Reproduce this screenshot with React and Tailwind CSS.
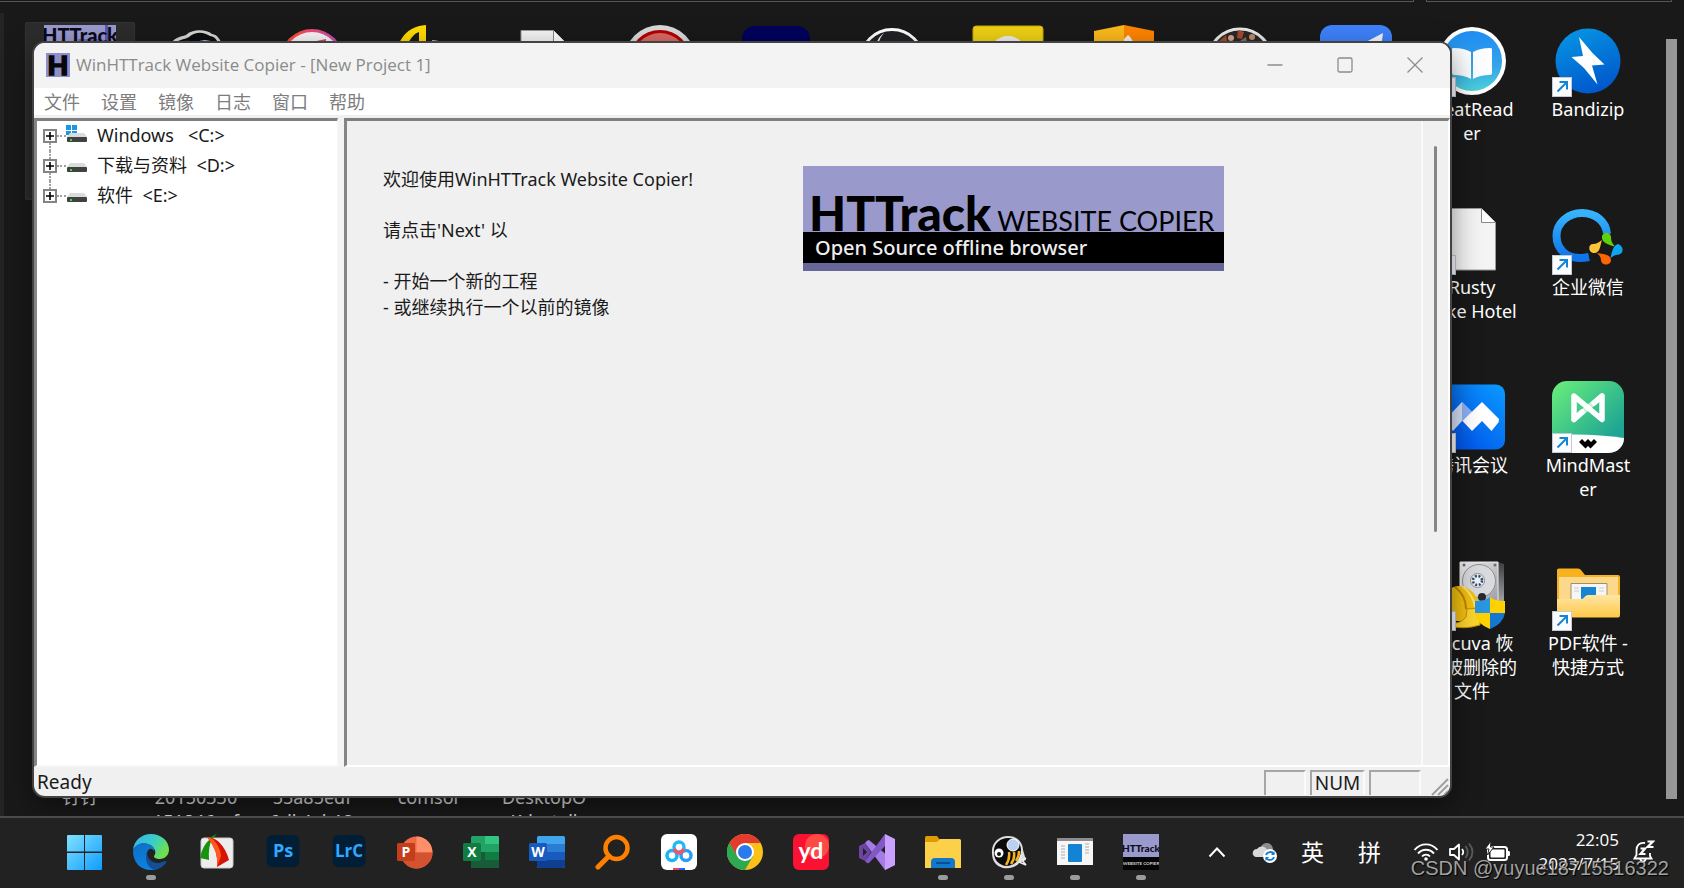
import React from "react";

const UI = "font-['Noto_Sans','Noto_Sans_CJK_SC',sans-serif]";
const NARROW = "font-['Open_Sans','Noto_Sans_CJK_SC',sans-serif]";

/* ---------- desktop icons, drawn on a 72 x 72 field ---------- */

function Art({ children, label, size = "size-[72px]", box = "0 0 72 72" }) {
  return (
    <svg viewBox={box} className={`${size} block shrink-0`} role="img" aria-label={label}>
      {children}
    </svg>
  );
}

function Shortcut() {
  return (
    <g>
      <rect x="0.5" y="52.5" width="19" height="19" fill="#fbfcfe" stroke="#c3c9d8" />
      <path d="M5.5 66.5L14 58M7.5 57H15V64.5" fill="none" stroke="#1583d6" strokeWidth="2" />
    </g>
  );
}

const HTTrackArt = () => (
  <Art label="WinHTTrack">
    <rect width="72" height="72" fill="#9999cc" />
    <rect y="44" width="72" height="28" fill="#050505" />
    <rect x="34" y="14" width="24" height="4" fill="#6c69c2" />
    <rect x="61" width="3" height="20" fill="#5b58bd" />
    <text x="36" y="18" textAnchor="middle" fill="#0b0a1c" fontFamily="Lato" fontSize="20" fontWeight="900">HTTrack</text>
  </Art>
);
const BirdArt = () => (
  <Art label="Bird">
    <path d="M8 22C14 12 20 12 26 10C32 4 46 4 52 9C58 10 60 14 64 24L60 60H12z" fill="#d5d5d3" />
    <path d="M12 21C18 14 24 15 29 12C36 6 44 7 50 11C56 12 58 16 60 24V56H14z" fill="#0c0d10" />
    <path d="M14 20C20 15 28 15 34 17L26 26H12z" fill="#33475c" />
    <ellipse cx="45" cy="24" rx="12" ry="9" fill="#a9bfd6" />
  </Art>
);
const RingArt = () => (
  <Art label="Music">
    <defs>
      <linearGradient id="ringA" x1="0" x2="1">
        <stop offset="0.2" stopColor="#ff4a3d" />
        <stop offset="1" stopColor="#c04fd0" />
      </linearGradient>
    </defs>
    <circle cx="36" cy="36" r="32" fill="url(#ringA)" />
    <circle cx="36" cy="36" r="29" fill="#f7f5f6" />
    <path d="M26 19L50 14V44H46V22L30 25V48H26z" fill="#cf4a63" />
  </Art>
);
const YellowArcArt = () => (
  <Art label="Scanner">
    <path d="M34 0V44H2C2 20 12 1 34 0z" fill="#ffdb00" />
    <path d="M27 7V38H12C12 24 18 10 27 7z" fill="#1a1a1a" />
    <path d="M40 15C48 15 54 19 58 26L40 40z" fill="#b9b9b9" />
  </Art>
);
const DocArt = ({ shortcut }) => (
  <Art label="Document">
    <path d="M13 5.5H45.5L59.5 19.5V67H13z" fill="#f4f4f4" stroke="#9a9a9a" />
    <path d="M45.5 5.5V19.5H59.5" fill="#ffffff" stroke="#888888" />
    {shortcut && <Shortcut />}
  </Art>
);
const RecordArt = () => (
  <Art label="Recorder">
    <circle cx="36" cy="36" r="36" fill="#d9dadb" />
    <circle cx="36" cy="36" r="31" fill="#b50000" />
    <circle cx="36" cy="36" r="28" fill="#d96a64" />
  </Art>
);
const NavyArt = () => (
  <Art label="Premiere">
    <rect x="2" y="1" width="68" height="68" rx="13" fill="#00005b" />
  </Art>
);
const BlackOrbArt = () => (
  <Art label="Orb">
    <circle cx="36" cy="36" r="31.5" fill="#232125" stroke="#ffffff" strokeWidth="3" />
    <path d="M20 26C20 16 22 13 28 8C23 14 22 18 22 28z" fill="#ffffff" />
  </Art>
);
const YellowCardArt = () => (
  <Art label="Card">
    <rect x="1" y="1" width="70" height="66" rx="3" fill="#eed015" stroke="#c8a800" />
    <circle cx="36" cy="30" r="19" fill="#ededed" />
  </Art>
);
const CubeArt = () => (
  <Art label="Cube">
    <path d="M36 0L6 6V60L36 72z" fill="#fbb91b" />
    <path d="M36 0L66 6V60L36 72z" fill="#ff8400" />
    <path d="M40 10C44 13 46 18 50 30L36 40V14z" fill="#f3f0ec" />
  </Art>
);
const PhotoArt = () => (
  <Art label="Game">
    <circle cx="36" cy="36" r="32" fill="#2d2624" stroke="#e8e8e8" strokeWidth="3" />
    <path d="M14 17L22 10L24 20zM34 5L40 7L38 14L33 13z" fill="#a34a2e" />
    <circle cx="27" cy="13" r="3" fill="#d0a68c" />
    <circle cx="48" cy="12" r="3" fill="#b98d70" />
    <path d="M30 20L42 12L44 24zM52 16L58 20L50 24z" fill="#7c7269" />
  </Art>
);
const PaperPlaneArt = () => (
  <Art label="Plane">
    <rect width="72" height="72" rx="12" fill="#3f82fb" />
    <path d="M63 8L44 18L40 24L60 30zM4 17L16 19L40 34L20 30z" fill="#f4f7fd" />
  </Art>
);
const NeatReaderArt = () => (
  <Art label="NeatReader">
    <defs>
      <linearGradient id="neat" x1="0" y1="0" x2="0" y2="1">
        <stop offset="0" stopColor="#1f8cf3" />
        <stop offset="0.6" stopColor="#35a5ea" />
        <stop offset="1" stopColor="#4bd3da" />
      </linearGradient>
    </defs>
    <circle cx="36" cy="36" r="34" fill="#ffffff" />
    <circle cx="36" cy="36" r="30" fill="url(#neat)" />
    <path d="M16 24Q16 23 18 23Q28 23 35 27V54Q28 50 18 50Q16 50 16 48zM56 24Q56 23 54 23Q44 23 37 27V54Q44 50 54 50Q56 50 56 48z" fill="#fbfdff" />
    <Shortcut />
  </Art>
);
const BandizipArt = () => (
  <Art label="Bandizip">
    <defs>
      <linearGradient id="bandi" x1="0.2" y1="0" x2="0.6" y2="1">
        <stop offset="0" stopColor="#0696e4" />
        <stop offset="1" stopColor="#0057cb" />
      </linearGradient>
    </defs>
    <circle cx="36" cy="36" r="32.5" fill="url(#bandi)" />
    <path d="M27 12L40.5 28L52.5 39.5L40 40.5L45.5 59.5L32 43L19.5 32L31 31z" fill="#ffffff" />
    <Shortcut />
  </Art>
);
const WeComArt = () => (
  <Art label="WeCom">
    <defs>
      <linearGradient id="wecom" x1="0" y1="0" x2="0" y2="1">
        <stop offset="0" stopColor="#37b3fc" />
        <stop offset="1" stopColor="#0e74e8" />
      </linearGradient>
    </defs>
    <path d="M55 31C54 18 43 10 30 10C16 10 4.500 20 4.500 33C4.500 42 9 48 15 52C22 55.500 30 55.500 37 54" fill="none" stroke="url(#wecom)" strokeWidth="8" />
    <circle cx="53.500" cy="44.500" r="14" fill="#191919" />
    <path d="M50 33C52 28 58 29 59 33.500C59 38 60 40 63 43.500C57 42 49 40 50 33z" fill="#5fd10c" />
    <path d="M66 41C72 43 72 50 67 51.500C64 51.500 61 53 58 55.500C60 51 60 43 66 41z" fill="#0fa6ee" />
    <path d="M59 57C59 63 49 63 49 57C49 54 47 52 45 50C51 51 58 51 59 57z" fill="#fc6500" />
    <path d="M41 50C36 49 36 41 41 41C45 41 47 39 50 37C48 41 49 51 41 50z" fill="#fdc437" />
    <Shortcut />
  </Art>
);
const MeetingArt = () => (
  <Art label="Tencent Meeting">
    <defs>
      <linearGradient id="meet" x1="1" y1="0" x2="0" y2="1">
        <stop offset="0" stopColor="#0a9bff" />
        <stop offset="1" stopColor="#0046e6" />
      </linearGradient>
    </defs>
    <rect x="3" y="3.500" width="66" height="65" rx="9" fill="url(#meet)" />
    <path d="M26 21L36 31L26 40L17 50L8 40z" fill="#d6e2f8" />
    <path d="M26 21L36 31V40L26 40z" fill="#8fb0f7" />
    <path d="M46 21L63 38Q63 41 62 42L55.500 50L46 40L36 50L26.500 40z" fill="#ffffff" />
    <Shortcut />
  </Art>
);
const MindMasterArt = () => (
  <Art label="MindMaster">
    <defs>
      <linearGradient id="mind" x1="0" y1="0" x2="1" y2="1">
        <stop offset="0" stopColor="#6bf07a" />
        <stop offset="0.8" stopColor="#1ea594" />
      </linearGradient>
      <clipPath id="mindClip">
        <rect width="72" height="72" rx="15" />
      </clipPath>
    </defs>
    <g clipPath="url(#mindClip)">
      <rect width="72" height="72" fill="url(#mind)" />
      <path d="M0 54Q40 52 72 57V72H0z" fill="#ffffff" />
      <path d="M22 38L50 15" stroke="#c5f1d6" strokeWidth="5.500" />
      <path d="M22 38.500V15L50 38.500V15M22 38.500L30 31M50 15L42 22" fill="none" stroke="#ffffff" strokeWidth="5.500" strokeLinejoin="round" strokeLinecap="round" />
      <path d="M27 61L30 58L33 61L36 58L39 61L42 58L45 61L38.500 67.500L36 65L33.500 67.500z" fill="#000000" />
    </g>
    <Shortcut />
  </Art>
);
const RecuvaArt = () => (
  <Art label="Recuva">
    <defs>
      <linearGradient id="disk" x1="0" y1="0" x2="1" y2="1">
        <stop offset="0" stopColor="#f2f2f3" />
        <stop offset="1" stopColor="#9b9ca1" />
      </linearGradient>
      <linearGradient id="diskSide" x1="0" y1="0" x2="0" y2="1">
        <stop offset="0" stopColor="#3c3c3e" />
        <stop offset="1" stopColor="#a6a6a8" />
      </linearGradient>
    </defs>
    <path d="M62 3L68 5V44H62z" fill="url(#diskSide)" />
    <path d="M24 3H62V44H24z" fill="url(#disk)" stroke="#e9e9ea" />
    <circle cx="43" cy="22" r="16.500" fill="#d9dade" stroke="#8d8f96" />
    <circle cx="41.500" cy="21.500" r="7" fill="#eef0f4" stroke="#8d8f96" />
    <circle cx="41.500" cy="21.500" r="4.500" fill="none" stroke="#2d4d70" strokeWidth="2.500" strokeDasharray="2 1.600" />
    <circle cx="28" cy="6" r="1.500" fill="#6d6e72" />
    <circle cx="59" cy="6" r="1.500" fill="#6d6e72" />
    <circle cx="46" cy="38" r="4" fill="#2a2a2d" />
    <path d="M6 48C6 34 14 27 24 27C36 29 43 38 44 50L30 62H8z" fill="#f3c010" />
    <path d="M19 28C27 34 30 42 30 50" fill="none" stroke="#b98402" strokeWidth="2" />
    <path d="M26 27C34 33 38 40 39 48" fill="none" stroke="#fce468" strokeWidth="2" />
    <path d="M12 64Q24 66 30 58L31 50L44 49V66Q28 71 14 67z" fill="#fcd52e" stroke="#c68f00" />
    <path d="M39 42Q50 42 54 38V54H39z" fill="#2a96e0" />
    <path d="M69 42Q58 42 54 38V54H69z" fill="#ffd100" />
    <path d="M39 54H54V70Q41 65 39 54z" fill="#ffd100" />
    <path d="M69 54H54V70Q67 65 69 54z" fill="#1478d0" />
    <Shortcut />
  </Art>
);
const FolderArt = () => (
  <Art label="Folder">
    <defs>
      <linearGradient id="fold" x1="0" y1="0" x2="0" y2="1">
        <stop offset="0" stopColor="#ffe6a2" />
        <stop offset="1" stopColor="#fdc848" />
      </linearGradient>
    </defs>
    <path d="M5 11Q5 9.500 7 9.500H26Q28 9.500 29 11L33 16H66Q68 16 68 18V50H5z" fill="#f7b21e" />
    <path d="M7 18H66V50H7z" fill="#fbd88c" />
    <path d="M19 24.500H55V45H19z" fill="#f6f6f6" stroke="#a38f60" />
    <path d="M22 29H27M22 32H27M47 29H52M47 32H52" stroke="#c9ccd0" />
    <path d="M29 28H44V44H29z" fill="#1683d3" />
    <path d="M5 40H29Q31 40 33 37.500Q34 36 36 36H68V56Q68 58.500 66 58.500H7Q5 58.500 5 56z" fill="url(#fold)" />
    <Shortcut />
  </Art>
);

function DesktopItem({ art, lines = [], selected }) {
  return (
    <div className={`flex h-[178px] shrink-0 flex-col items-center pt-[3px] ${selected ? "mx-[3px] rounded-[2px] bg-[#2c2c2c] ring-1 ring-inset ring-[#333333]" : ""}`}>
      {art}
      <div className="w-full text-center text-[18px] leading-[24px] text-white">
        {lines.map((l) => (
          <div key={l}>{l}</div>
        ))}
      </div>
    </div>
  );
}

const COLUMNS = [
  { items: [{ art: <HTTrackArt />, selected: true }], foot: ["钉钉"] },
  { items: [{ art: <BirdArt /> }], foot: ["20150330", "151846_ef"] },
  { items: [{ art: <RingArt /> }], foot: ["55a85edf", "9db1cb12"] },
  { items: [{ art: <YellowArcArt /> }], foot: ["comsol"] },
  { items: [{ art: <DocArt /> }], foot: ["DesktopO", "Kdestall"] },
  { items: [{ art: <RecordArt /> }] },
  { items: [{ art: <NavyArt /> }] },
  { items: [{ art: <BlackOrbArt /> }] },
  { items: [{ art: <YellowCardArt /> }] },
  { items: [{ art: <CubeArt /> }] },
  { items: [{ art: <PhotoArt /> }] },
  { items: [{ art: <PaperPlaneArt /> }] },
  {
    items: [
      { art: <NeatReaderArt />, lines: ["NeatRead", "er"] },
      { art: <DocArt shortcut />, lines: ["Rusty", "Lake Hotel"] },
      { art: <MeetingArt />, lines: ["腾讯会议"] },
      { art: <RecuvaArt />, lines: ["Recuva 恢", "复被删除的", "文件"] },
    ],
  },
  {
    items: [
      { art: <BandizipArt />, lines: ["Bandizip"] },
      { art: <WeComArt />, lines: ["企业微信"] },
      { art: <MindMasterArt />, lines: ["MindMast", "er"] },
      { art: <FolderArt />, lines: ["PDF软件 -", "快捷方式"] },
    ],
  },
];

/* ---------- application window ---------- */

const MENUS = ["文件", "设置", "镜像", "日志", "窗口", "帮助"];
const DRIVES = [
  { name: "Windows", letter: "<C:>", system: true },
  { name: "下载与资料", letter: "<D:>" },
  { name: "软件", letter: "<E:>" },
];

function DriveIcon({ system }) {
  return (
    <svg viewBox="0 0 22 22" className="size-[22px] shrink-0" aria-hidden="true">
      {system && <path d="M0 0H5V5H0zM6 0H11V5H6zM0 6H5V10H0zM6 6H11V10H6z" fill="#1b97e8" />}
      <path d="M4 8H18L21 12H1z" fill="#d9dbde" />
      <rect x="1" y="12" width="20" height="5" rx="1" fill="#3f4340" />
      <rect x="4" y="14" width="2" height="2" fill="#42d64a" />
    </svg>
  );
}

function Tree() {
  return (
    <ul className="flex flex-col px-[6px]" role="tree">
      {DRIVES.map((d, i) => (
        <li key={d.letter} className="flex h-[30px] items-center" role="treeitem">
          <div className="flex h-full w-[14px] flex-col items-center">
            <span className={`w-0 flex-1 border-l-2 border-dotted ${i ? "border-[#a0a0a0]" : "border-transparent"}`} />
            <button className="flex size-[14px] items-center justify-center border-2 border-[#848484] bg-white" aria-label={`Expand ${d.name}`}>
              <svg viewBox="0 0 8 8" className="size-[8px]">
                <path d="M4 0V8M0 4H8" stroke="#000000" strokeWidth="1.6" />
              </svg>
            </button>
            <span className={`w-0 flex-1 border-l-2 border-dotted ${i < 2 ? "border-[#a0a0a0]" : "border-transparent"}`} />
          </div>
          <span className="w-[9px] border-t-2 border-dotted border-[#a0a0a0]" />
          <DriveIcon system={d.system} />
          <span className="whitespace-pre pb-[2px] pl-[9px] text-[18px] leading-[24px] text-[#1a1a1a]">
            {d.name}
            {d.system ? "   " : "  "}
            {d.letter}
          </span>
        </li>
      ))}
    </ul>
  );
}

function Banner() {
  return (
    <div className="flex h-[105px] w-[421px] shrink-0 flex-col bg-[#666699]">
      <div className="flex h-[66px] items-end gap-[6px] bg-[#9999cc] pl-[6px] text-black">
        <span className="font-['Lato',sans-serif] text-[48px] font-black leading-[38px]">HTTrack</span>
        <span className="whitespace-nowrap font-['Lato',sans-serif] text-[27px] leading-[22px]">WEBSITE COPIER</span>
      </div>
      <div className="flex h-[31px] items-center bg-black pl-[12px] text-[20px] font-medium leading-[24px] text-[#eeeeee]">
        Open Source offline browser
      </div>
    </div>
  );
}

function AppWindow() {
  return (
    <section className="absolute bottom-[20px] left-[34px] right-[234px] top-[43px] flex flex-col overflow-hidden rounded-[11px] bg-[#f0f0f0] shadow-[0_0_0_2px_#434343,0_10px_30px_rgba(0,0,0,0.5)]">
      <header className="flex h-[45px] shrink-0 items-center bg-[#f3f3f3] pb-[2px] pl-[12px]">
        <svg viewBox="0 0 24 24" className="size-[24px]" aria-hidden="true">
          <rect width="24" height="24" fill="#8f8fc8" />
          <text x="12" y="22" textAnchor="middle" fill="#08080c" stroke="#08080c" strokeWidth="1.5" fontFamily="Lato" fontSize="27" fontWeight="900">H</text>
        </svg>
        <h1 className={`flex-1 pl-[6px] text-[17px] leading-[24px] text-[#8a8a8a] ${NARROW}`}>WinHTTrack Website Copier - [New Project 1]</h1>
        <button className="flex h-full w-[70px] items-center justify-center" aria-label="Minimize">
          <svg viewBox="0 0 16 16" className="size-[16px]" stroke="#8c8c8c" strokeWidth="1.3">
            <path d="M0.500 8H15.500" />
          </svg>
        </button>
        <button className="flex h-full w-[70px] items-center justify-center" aria-label="Maximize">
          <svg viewBox="0 0 16 16" className="size-[16px]" fill="none" stroke="#8c8c8c" strokeWidth="1.3">
            <rect x="1" y="1" width="14" height="14" rx="1.500" />
          </svg>
        </button>
        <button className="flex h-full w-[70px] items-center justify-center" aria-label="Close">
          <svg viewBox="0 0 16 16" className="size-[16px]" stroke="#8c8c8c" strokeWidth="1.3">
            <path d="M0.500 0.500L15.500 15.500M15.500 0.500L0.500 15.500" />
          </svg>
        </button>
      </header>
      <nav className="flex h-[27px] shrink-0 items-center gap-[21px] bg-white pl-[10px] text-[18px] leading-[24px] text-[#7d7d7d]">
        {MENUS.map((m) => (
          <button key={m}>{m}</button>
        ))}
      </nav>
      <div className="flex flex-1 pt-[3px]">
        <div className="w-[304px] shrink-0 border-b-2 border-l-[3px] border-r border-t-[3px] border-b-[#f7f7f7] border-l-[#858585] border-r-[#f7f7f7] border-t-[#7f7f7f] bg-white">
          <Tree />
        </div>
        <div className="w-[6px] shrink-0 bg-[#f3f3f3]" />
        <main className="flex flex-1 border-b-2 border-l-[3px] border-r-2 border-t-[3px] border-b-white border-l-[#858585] border-r-white border-t-[#7f7f7f]">
          <div className="flex flex-1 items-start pl-[36px] pt-[45px]">
            <div className="flex w-[420px] flex-col gap-[25px] text-[18px] leading-[26px] text-[#1a1a1a]">
              <p>欢迎使用WinHTTrack Website Copier!</p>
              <p>请点击'Next' 以</p>
              <p>
                - 开始一个新的工程
                <br />- 或继续执行一个以前的镜像
              </p>
            </div>
            <Banner />
          </div>
          <div className="flex w-[27px] shrink-0 justify-center border-l-2 border-[#fafafa] pt-[25px]">
            <div className="h-[386px] w-[3px] rounded-full bg-[#868686]" />
          </div>
        </main>
      </div>
      <footer className="flex h-[29px] shrink-0 items-center gap-[4px] pl-[3px] pt-[2px] text-[19px] leading-[23px] text-[#1a1a1a]">
        <span className="flex-1">Ready</span>
        <span className="h-[25px] w-[42px] border-2 border-b-0 border-l-[#a6a6a6] border-r-[#fafafa] border-t-[#a6a6a6]" />
        <span className="h-[25px] w-[55px] border-2 border-b-0 border-l-[#a6a6a6] border-r-[#fafafa] border-t-[#a6a6a6] text-center">NUM</span>
        <span className="h-[25px] w-[52px] border-2 border-b-0 border-l-[#a6a6a6] border-r-[#fafafa] border-t-[#a6a6a6]" />
        <svg viewBox="0 0 25 27" className="h-[27px] w-[25px] shrink-0" stroke="#a0a0a0" strokeWidth="2" aria-hidden="true">
          <path d="M7 26L23 10M13 26L23 16M19 26L23 22" />
        </svg>
      </footer>
    </section>
  );
}

/* ---------- taskbar ---------- */

function Task({ children, label, box = "0 0 36 36" }) {
  return <Art label={label} size="size-[36px]" box={box}>{children}</Art>;
}

const WindowsIcon = () => (
  <Task label="Start">
    <defs>
      <linearGradient id="win" x1="0" y1="0" x2="1" y2="1">
        <stop offset="0" stopColor="#82e0ff" />
        <stop offset="1" stopColor="#0d9dff" />
      </linearGradient>
    </defs>
    <path d="M1 1H17V17.500H0V2Q0 1 1 1zM18 1H34Q35 1 35 2V17.500H18zM0 19H17V36H1Q0 36 0 35zM18 19H35V35Q35 36 34 36H18z" fill="url(#win)" />
  </Task>
);
const EdgeIcon = () => (
  <Task label="Edge">
    <defs>
      <linearGradient id="edgeTop" x1="0" y1="0" x2="1" y2="0.5">
        <stop offset="0.1" stopColor="#35b5ea" />
        <stop offset="0.6" stopColor="#3bcfc0" />
        <stop offset="1" stopColor="#6fe04c" />
      </linearGradient>
      <linearGradient id="edgeLow" x1="0" y1="0" x2="0.6" y2="1">
        <stop offset="0" stopColor="#0f6fc4" />
        <stop offset="1" stopColor="#0b84e2" />
      </linearGradient>
    </defs>
    <path d="M0 16C1 6 9 0 18 0C28 0 36 7 36 15.500C36 21 32 25 27 25C23 25 20.500 23.500 21 22C24 19 22 13 16 10.500C10 8 3 10 0 16z" fill="url(#edgeTop)" />
    <path d="M0 17C2 11 8 8 14 9.500C20 11 22 15 21 17C18 12 13 16 14 22C15 30 24 31 33 27C34 29 27 36 18 36C7 36 0 28 0 17z" fill="url(#edgeLow)" />
    <path d="M14 18C11 26 15 35 22 35.500C28 34 32 31 33.500 27.500C33.500 26.500 32 27 30 28C22 31 14 27 14 18z" fill="#144e97" />
  </Task>
);
const CaptureIcon = () => (
  <Task label="FastStone Capture">
    <rect x="2" y="4" width="32" height="30" rx="3" fill="#ededed" stroke="#c9c9c9" />
    <path d="M18 0Q12 2 11 5Q3 12 1 24L10 26Q9 13 13 5z" fill="#17930d" />
    <path d="M8 3Q16 4 20 8Q27 15 30 26L18 33Q20 17 8 3z" fill="#d61505" />
    <path d="M8 3Q14 4 17 9Q22 16 22 22L18 33Q20 17 8 3z" fill="#ff5a1c" />
  </Task>
);
const AdobeIcon = ({ name }) => (
  <Task label={name}>
    <rect x="1.500" y="1" width="33" height="32" rx="6" fill="#001e36" />
    <text x="18" y="22.500" textAnchor="middle" fill="#31a8ff" fontFamily="Open Sans" fontSize={name === "Ps" ? 18 : 17} fontWeight="700">{name}</text>
  </Task>
);
const OfficeIcon = ({ letter, badge, children }) => (
  <Task label={letter}>
    {children}
    <rect x="0" y="9" width="18" height="18" rx="1.500" fill={badge} />
    <text x="9" y="23" textAnchor="middle" fill="#ffffff" fontFamily="Open Sans" fontSize="14" fontWeight="700">{letter}</text>
  </Task>
);
const PowerPointIcon = () => (
  <OfficeIcon letter="P" badge="#c43e1c">
    <circle cx="19.500" cy="18.500" r="16" fill="#ed6c47" />
    <path d="M19.500 2.500A16 16 0 0 1 35.500 18.500H19.500z" fill="#ff8f6b" />
    <path d="M3.500 18.500A16 16 0 0 0 35.500 18.500z" fill="#d35230" />
  </OfficeIcon>
);
const ExcelIcon = () => (
  <OfficeIcon letter="X" badge="#107c41">
    <rect x="8" y="2" width="28" height="32" rx="1.500" fill="#21a366" />
    <path d="M22 2H34.500Q36 2 36 3.500V10H22z" fill="#33c481" />
    <path d="M8 18H22V26H8z" fill="#185c37" />
    <path d="M22 18H36V26H22z" fill="#107c41" />
    <path d="M8 26H36V32.500Q36 34 34.500 34H9.500Q8 34 8 32.500z" fill="#185c37" />
  </OfficeIcon>
);
const WordIcon = () => (
  <OfficeIcon letter="W" badge="#185abd">
    <rect x="8" y="2" width="28" height="32" rx="1.500" fill="#41a5ee" />
    <path d="M8 10H36V18H8z" fill="#2b7cd3" />
    <path d="M8 18H36V26H8z" fill="#185abd" />
    <path d="M8 26H36V32.500Q36 34 34.500 34H9.500Q8 34 8 32.500z" fill="#103f91" />
  </OfficeIcon>
);
const SearchIcon = () => (
  <Task label="Everything">
    <circle cx="21.500" cy="14" r="11" fill="none" stroke="#ff8000" strokeWidth="4.500" />
    <path d="M14 22L3 33" stroke="#ff8000" strokeWidth="5" strokeLinecap="round" />
  </Task>
);
const NetdiskIcon = () => (
  <Task label="Baidu Netdisk">
    <rect width="36" height="36" rx="6" fill="#ffffff" />
    <circle cx="11" cy="21.500" r="5" fill="none" stroke="#18b5f5" strokeWidth="3.500" />
    <circle cx="25" cy="21.500" r="5" fill="none" stroke="#2a9df5" strokeWidth="3.500" />
    <circle cx="18" cy="13" r="5" fill="none" stroke="#27b7f7" strokeWidth="3.500" />
    <path d="M13 15Q18 23 23 15" fill="none" stroke="#f2546e" strokeWidth="3.500" />
    <path d="M12 34H18V36H12z" fill="#f2405e" />
    <path d="M18 34H24V36H18z" fill="#2469f0" />
  </Task>
);
const ChromeIcon = () => (
  <Task label="Chrome">
    <circle cx="18" cy="18" r="18" fill="#fbc116" />
    <path d="M18 18L2.400 9A18 18 0 0 1 33.600 9H18z" fill="#e33b2e" />
    <path d="M2.400 9A18 18 0 0 0 18 36L25.800 22.500L18 18L10.200 22.500z" fill="#2da94f" />
    <path d="M2.400 9L10.200 22.500L18 18V9z" fill="#e33b2e" />
    <path d="M2.400 9L10.200 22.500L6 24L1 14z" fill="#2da94f" />
    <circle cx="18" cy="18" r="9" fill="#ffffff" />
    <circle cx="18" cy="18" r="7" fill="#2a7bee" />
  </Task>
);
const YoudaoIcon = () => (
  <Task label="Youdao">
    <rect width="36" height="36" rx="6" fill="#fb1233" />
    <circle cx="24" cy="12" r="12" fill="#fd4a45" />
    <text x="18" y="25" textAnchor="middle" fill="#ffffff" fontFamily="Lato" fontSize="23" fontWeight="700">yd</text>
  </Task>
);
const VisualStudioIcon = () => (
  <Task label="Visual Studio">
    <path d="M0 12L6 9L12 18L6 27L0 24z" fill="#6b45a4" />
    <path d="M4 14V22L8 18z" fill="#222222" />
    <path d="M6 9L26 36L36 31V28L10 6Q8 6 6 9z" fill="#a57be8" />
    <path d="M6 27L26 0V12L10 29Q8 30 6 27z" fill="#8258c4" />
    <path d="M26 0L36 5V31L26 36z" fill="#c9a0ff" />
  </Task>
);
const ExplorerIcon = () => (
  <Task label="File Explorer">
    <path d="M0 3.500Q0 2 1.500 2H12L15 6V12H0z" fill="#dd9b05" />
    <path d="M0 8H12L15 5H34.500Q36 5 36 6.500V34H0z" fill="#fdd049" />
    <path d="M6 34V28Q6 24 10 24H26Q30 24 30 28V34z" fill="#1278c9" />
    <path d="M11 29H25" stroke="#0b4f8f" strokeWidth="2" />
  </Task>
);
const BeeIcon = () => (
  <Task label="Bee">
    <path d="M1 19C0 9 8 2 17 2C27 2 32 9 32 16L35 26L28 29C25 34 17 35 12 34C5 32 1 27 1 19z" fill="#dedede" />
    <path d="M3 19C2 10 9 4 17 4C26 4 30 10 30 16C30 25 24 32 15 32C8 31 3 26 3 19z" fill="#0b0b0c" />
    <path d="M18 18Q19 25 15 31M23 18Q24 25 20 30M28 17Q28 23 25 27" fill="none" stroke="#f3b51b" strokeWidth="2.500" />
    <circle cx="22" cy="11" r="6" fill="#bcd0f1" stroke="#ffffff" />
    <circle cx="8" cy="19" r="4.500" fill="#ffffff" />
    <circle cx="8" cy="20" r="2" fill="#111111" />
    <path d="M30 21L28 28L35 31L31 26L35 24" fill="none" stroke="#eeeeee" strokeWidth="1.500" />
  </Task>
);
const AppIcon = () => (
  <Task label="Program">
    <path d="M0 5H36V31H0z" fill="#f6f6f6" />
    <path d="M0 4H36V7H0z" fill="#8d8d8d" />
    <path d="M4 12H8M4 15H8M4 18H8M4 21H8M4 24H8M28 10H32M28 13H32M28 16H32M28 19H32" stroke="#c2c6ca" strokeWidth="1.500" />
    <rect x="11" y="10" width="14" height="18" rx="1" fill="#1583d3" />
  </Task>
);
const HTTrackTaskIcon = () => (
  <Task label="WinHTTrack">
    <rect width="36" height="36" fill="#9999cc" />
    <rect y="23" width="36" height="13" fill="#050505" />
    <text x="18" y="18" textAnchor="middle" fill="#0b0a1c" fontFamily="Lato" fontSize="10" fontWeight="900">HTTrack</text>
    <text x="18" y="31" textAnchor="middle" fill="#d6d6d6" fontFamily="Lato" fontSize="4.500" fontWeight="700">WEBSITE COPIER</text>
  </Task>
);

const TASKS = [
  { icon: <WindowsIcon /> },
  { icon: <EdgeIcon />, running: true },
  { icon: <CaptureIcon /> },
  { icon: <AdobeIcon name="Ps" /> },
  { icon: <AdobeIcon name="LrC" /> },
  { icon: <PowerPointIcon /> },
  { icon: <ExcelIcon /> },
  { icon: <WordIcon /> },
  { icon: <SearchIcon /> },
  { icon: <NetdiskIcon /> },
  { icon: <ChromeIcon /> },
  { icon: <YoudaoIcon /> },
  { icon: <VisualStudioIcon /> },
  { icon: <ExplorerIcon />, running: true },
  { icon: <BeeIcon />, running: true },
  { icon: <AppIcon />, running: true },
  { icon: <HTTrackTaskIcon />, running: true },
];

function Tray() {
  return (
    <div className={`flex items-center pb-[3px] pr-[29px] text-white ${NARROW}`}>
      <button className="w-[18px]" aria-label="Show hidden icons">
        <svg viewBox="0 0 18 12" className="h-[12px] w-[18px]" fill="none" stroke="#ffffff" strokeWidth="2">
          <path d="M1.500 10.500L9 2.500L16.500 10.500" />
        </svg>
      </button>
      <button className="ml-[26px] w-[26px]" aria-label="OneDrive">
        <svg viewBox="0 0 26 24" className="h-[24px] w-[26px]">
          <path d="M8 9C10 1 20 1 21 9L20 14H8z" fill="#8d8d8d" />
          <path d="M4 17C-1 16 0 9 5 9C8 5 14 6 15 10L22 15V17z" fill="#d8d8d8" />
          <circle cx="18" cy="16" r="7" fill="#ffffff" />
          <path d="M14 15A4.500 4.500 0 0 1 22 14M22 17A4.500 4.500 0 0 1 14 18" fill="none" stroke="#1379cf" strokeWidth="1.800" />
          <path d="M22.500 11V15H19zM13.500 21V17H17z" fill="#1379cf" />
        </svg>
      </button>
      <button className="ml-[23px] text-[23px] leading-[32px]">英</button>
      <button className="ml-[34px] text-[23px] leading-[32px]">拼</button>
      <button className="ml-[32px] flex items-center gap-[10px]" aria-label="Network, volume and battery">
        <svg viewBox="0 0 26 20" className="h-[20px] w-[26px]" fill="none" stroke="#ffffff" strokeWidth="1.900">
          <path d="M1.500 8C8 0.500 18 0.500 24.500 8M5 11.500C9.500 6.500 16.500 6.500 21 11.500M9 14.500C11 12 15 12 17 14.500" />
          <circle cx="13" cy="17" r="1.800" fill="#ffffff" stroke="none" />
        </svg>
        <svg viewBox="0 0 26 20" className="h-[20px] w-[26px]" fill="none" stroke="#ffffff" strokeWidth="1.800">
          <path d="M1 7H5L10 2.500V17.500L5 13H1z" strokeLinejoin="round" />
          <path d="M13 7Q15.500 10 13 13" />
          <path d="M16.500 4Q21 10 16.500 16M20 1.500Q27 10 20 18.500" stroke="#5a5a5a" />
        </svg>
        <svg viewBox="0 0 26 20" className="h-[20px] w-[26px]">
          <rect x="3" y="5" width="19" height="13" rx="2.500" fill="none" stroke="#ffffff" strokeWidth="2" />
          <rect x="5.500" y="7.500" width="14" height="8" rx="1" fill="#ffffff" />
          <path d="M22.500 9H24Q25 9 25 10.500V12.500Q25 14 24 14H22.500z" fill="#ffffff" />
          <path d="M6 -1L0 7H4L2.500 13L9 5H5.500z" fill="#ffffff" stroke="#222222" strokeWidth="1" />
        </svg>
      </button>
      <button className="ml-[22px] w-[86px] text-right text-[17px] leading-[24px]">
        <span className="block">22:05</span>
        <span className="block">2023/7/15</span>
      </button>
      <button className="ml-[14px]" aria-label="Notifications">
        <svg viewBox="0 0 22 24" className="h-[24px] w-[22px]" fill="none" stroke="#ffffff" strokeWidth="1.800">
          <path d="M12 3C6 2 3.500 6 3.500 10V15L1.500 18.500H18.500L17 16V13" />
          <path d="M7 19Q10 24.500 13 19" />
          <path d="M7.500 8.500H12L7.500 14H12.500M14.500 1.500H20L14.500 7H20.500" strokeWidth="2.200" />
        </svg>
      </button>
    </div>
  );
}

export default function App() {
  return (
    <div className={`relative flex h-screen flex-col overflow-hidden bg-[#191919] ${UI}`}>
      <div className="relative flex min-h-0 flex-1 flex-col overflow-hidden">
        <div className="flex h-[2px] shrink-0 gap-[12px] pr-[12px]">
          <div className="flex-1 border-b border-r border-[#555555]" />
          <div className="w-[246px] border-x border-b border-[#555555]" />
        </div>
        <div className="flex min-h-0 flex-1">
          <div className="mt-[11px] w-[4px] bg-[#242424]" />
          <div className="flex min-w-0 flex-1 pl-[18px] pt-[20px]">
            {COLUMNS.map((col, i) => (
              <div key={i} className="flex w-[116px] shrink-0 flex-col">
                {col.items.map((it, j) => (
                  <DesktopItem key={j} {...it} />
                ))}
                {col.foot && (
                  <div className="shrink-0 pt-[585px] text-center text-[18px] leading-[24px] text-[#e0e0e0]">
                    {col.foot.map((t) => (
                      <div key={t}>{t}</div>
                    ))}
                  </div>
                )}
              </div>
            ))}
          </div>
          <div className="mb-[17px] mr-[7px] mt-[37px] w-[11px] shrink-0 bg-[#969696]" />
        </div>
        <AppWindow />
      </div>
      <footer className="flex h-[72px] shrink-0 justify-between border-t-2 border-[#4a4a4a] bg-[#222222]">
        <div className="flex pl-[52px]">
          {TASKS.map((t, i) => (
            <button key={i} className="flex w-[66px] flex-col items-center gap-[5px] pt-[16px]">
              {t.icon}
              {t.running && <span className="h-[5px] w-[10px] rounded-full bg-[#9b9b9b]" />}
            </button>
          ))}
        </div>
        <Tray />
      </footer>
      <div className="absolute bottom-[8px] right-[15px] font-['Liberation_Sans',sans-serif] text-[20px] leading-[24px] text-[#bdbdbd]/85 [text-shadow:1px_1px_1px_#000000]">
        CSDN @yuyue18715516322
      </div>
    </div>
  );
}
